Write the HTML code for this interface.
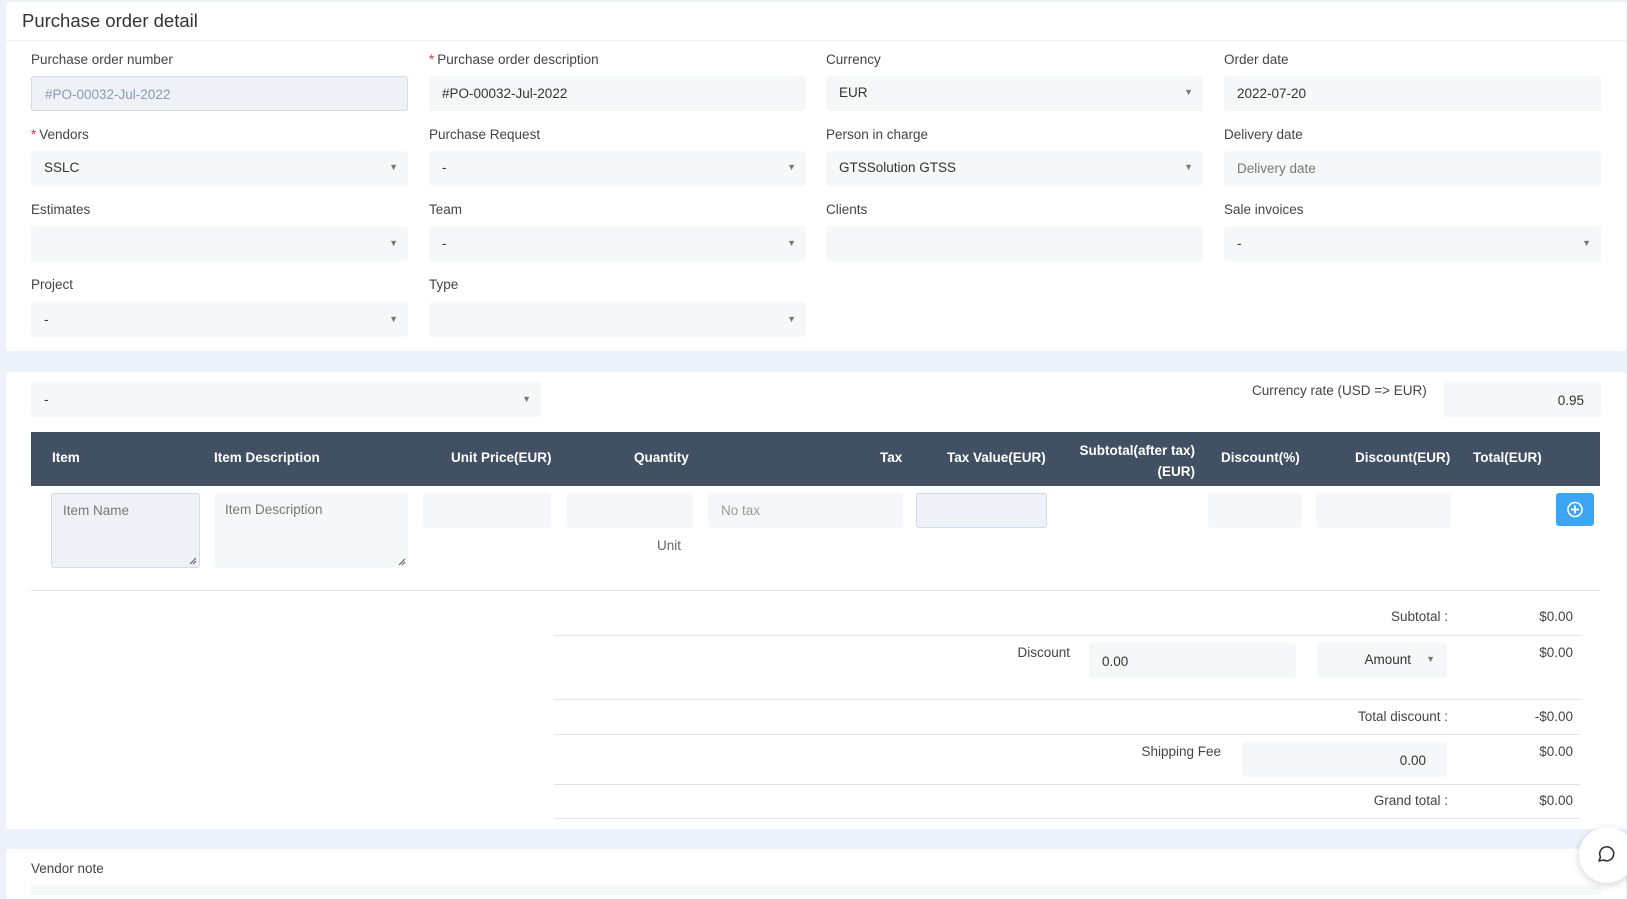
<!DOCTYPE html>
<html><head><meta charset="utf-8"><style>
*{box-sizing:border-box;margin:0;padding:0}
body{width:1627px;height:891px;overflow:hidden;background:#edf1f9;font-family:"Liberation Sans",sans-serif;font-size:13.5px;color:#4a4a4a;position:relative}
.a{position:absolute}
.card{position:absolute;background:#fff;left:6px;width:1620px;border-radius:3px}
.lbl{position:absolute;font-size:13.5px;color:#444;white-space:nowrap}
.req{color:#e53935;margin-right:3px}
.in{position:absolute;background:#f6f7f9;border-radius:3px;height:35px;font-size:13.5px;color:#333;padding:0 13px;line-height:35px;white-space:nowrap}
.dis{background:#eef1f6;border:1px solid #d3dae4;color:#8a9ab5}
.ph{color:#777}
.car{position:absolute;right:10px;top:0;font-size:9px;color:#777}
.th{position:absolute;color:#fff;font-weight:bold;font-size:13.5px;white-space:nowrap}
.hl{position:absolute;height:1px;background:#dfe2e6}
.r{text-align:right}
.grip{position:absolute;right:2px;bottom:2px}
</style></head><body>
<div class="card" style="top:2px;height:349px">
<div class="a" style="left:16px;top:8px;font-size:18.5px;color:#333">Purchase order detail</div>
<div class="hl" style="left:0;top:38px;width:1621px;background:#eceef1"></div>
</div>
<div class="lbl" style="left:31px;top:52px">Purchase order number</div>
<div class="in dis" style="left:31px;top:76px;width:377px">#PO-00032-Jul-2022</div>
<div class="lbl" style="left:429px;top:52px"><span class="req">*</span>Purchase order description</div>
<div class="in" style="left:429px;top:76px;width:377px">#PO-00032-Jul-2022</div>
<div class="lbl" style="left:826px;top:52px">Currency</div>
<div class="in" style="left:826px;top:76px;width:377px;line-height:33px">EUR<span class="car">▼</span></div>
<div class="lbl" style="left:1224px;top:52px">Order date</div>
<div class="in" style="left:1224px;top:76px;width:377px">2022-07-20</div>

<div class="lbl" style="left:31px;top:127px"><span class="req">*</span>Vendors</div>
<div class="in" style="left:31px;top:151px;width:377px;line-height:33px">SSLC<span class="car">▼</span></div>
<div class="lbl" style="left:429px;top:127px">Purchase Request</div>
<div class="in" style="left:429px;top:151px;width:377px;line-height:33px">-<span class="car">▼</span></div>
<div class="lbl" style="left:826px;top:127px">Person in charge</div>
<div class="in" style="left:826px;top:151px;width:377px;line-height:33px">GTSSolution GTSS<span class="car">▼</span></div>
<div class="lbl" style="left:1224px;top:127px">Delivery date</div>
<div class="in ph" style="left:1224px;top:151px;width:377px">Delivery date</div>

<div class="lbl" style="left:31px;top:202px">Estimates</div>
<div class="in" style="left:31px;top:226px;width:377px"><span class="car">▼</span></div>
<div class="lbl" style="left:429px;top:202px">Team</div>
<div class="in" style="left:429px;top:226px;width:377px">-<span class="car">▼</span></div>
<div class="lbl" style="left:826px;top:202px">Clients</div>
<div class="in" style="left:826px;top:226px;width:377px"></div>
<div class="lbl" style="left:1224px;top:202px">Sale invoices</div>
<div class="in" style="left:1224px;top:226px;width:377px">-<span class="car">▼</span></div>

<div class="lbl" style="left:31px;top:277px">Project</div>
<div class="in" style="left:31px;top:302px;width:377px">-<span class="car">▼</span></div>
<div class="lbl" style="left:429px;top:277px">Type</div>
<div class="in" style="left:429px;top:302px;width:377px"><span class="car">▼</span></div>

<div class="card" style="top:372px;height:457px"></div>
<div class="in" style="left:31px;top:382px;width:510px">-<span class="car">▼</span></div>
<div class="lbl" style="left:1252px;top:383px">Currency rate (USD =&gt; EUR)</div>
<div class="in r" style="left:1444px;top:382px;width:157px;padding-right:17px;line-height:37px">0.95</div>

<div class="a" style="left:31px;top:432px;width:1569px;height:54px;background:#415163"></div>
<div class="th" style="left:52px;top:450px">Item</div>
<div class="th" style="left:214px;top:450px">Item Description</div>
<div class="th" style="left:451px;top:450px">Unit Price(EUR)</div>
<div class="th" style="left:634px;top:450px">Quantity</div>
<div class="th" style="left:880px;top:450px">Tax</div>
<div class="th" style="left:947px;top:450px">Tax Value(EUR)</div>
<div class="th r" style="left:1060px;top:440px;width:135px;line-height:21px">Subtotal(after tax)<br>(EUR)</div>
<div class="th" style="left:1221px;top:450px">Discount(%)</div>
<div class="th" style="left:1355px;top:450px">Discount(EUR)</div>
<div class="th" style="left:1473px;top:450px">Total(EUR)</div>

<div class="in dis ph" style="left:51px;top:493px;width:149px;height:75px;line-height:34px;padding-left:11px">Item Name<svg class="grip" width="8" height="8"><path d="M1 7L7 1M4 7L7 4" stroke="#555" stroke-width="1"/></svg></div>
<div class="in ph" style="left:214px;top:493px;width:194px;height:75px;line-height:34px;padding-left:11px">Item Description<svg class="grip" width="8" height="8"><path d="M1 7L7 1M4 7L7 4" stroke="#555" stroke-width="1"/></svg></div>
<div class="in" style="left:423px;top:493px;width:128px"></div>
<div class="in" style="left:566px;top:493px;width:127px"></div>
<div class="in ph" style="left:708px;top:493px;width:195px;color:#999">No tax</div>
<div class="in dis" style="left:916px;top:493px;width:131px"></div>
<div class="in" style="left:1208px;top:493px;width:94px"></div>
<div class="in" style="left:1316px;top:493px;width:135px"></div>
<div class="a" style="left:1556px;top:493px;width:38px;height:33px;background:#3ca6f5;border-radius:3px">
<svg width="38" height="33" viewBox="0 0 38 33"><circle cx="19" cy="16.5" r="7" fill="none" stroke="#fff" stroke-width="1.6"/><path d="M19 12.5v8M15 16.5h8" stroke="#fff" stroke-width="1.8"/></svg></div>
<div class="lbl" style="left:657px;top:538px;color:#666">Unit</div>
<div class="hl" style="left:31px;top:590px;width:1569px"></div>

<div class="lbl r" style="left:1250px;top:609px;width:198px">Subtotal :</div>
<div class="lbl r" style="left:1480px;top:609px;width:93px">$0.00</div>
<div class="hl" style="left:554px;top:635px;width:1026px"></div>
<div class="lbl r" style="left:970px;top:645px;width:100px">Discount</div>
<div class="in" style="left:1089px;top:643px;width:207px;line-height:37px">0.00</div>
<div class="in r" style="left:1317px;top:643px;width:130px;padding-right:36px;line-height:33px">Amount<span class="car" style="right:12px">▼</span></div>
<div class="lbl r" style="left:1480px;top:645px;width:93px">$0.00</div>
<div class="hl" style="left:554px;top:699px;width:1026px"></div>
<div class="lbl r" style="left:1250px;top:709px;width:198px">Total discount :</div>
<div class="lbl r" style="left:1480px;top:709px;width:93px">-$0.00</div>
<div class="hl" style="left:554px;top:734px;width:1026px"></div>
<div class="lbl r" style="left:1100px;top:744px;width:121px">Shipping Fee</div>
<div class="in r" style="left:1242px;top:742px;width:205px;padding-right:21px;line-height:37px">0.00</div>
<div class="lbl r" style="left:1480px;top:744px;width:93px">$0.00</div>
<div class="hl" style="left:554px;top:784px;width:1026px"></div>
<div class="lbl r" style="left:1250px;top:793px;width:198px">Grand total :</div>
<div class="lbl r" style="left:1480px;top:793px;width:93px">$0.00</div>
<div class="hl" style="left:554px;top:818px;width:1026px"></div>

<div class="card" style="top:849px;height:50px"></div>
<div class="lbl" style="left:31px;top:861px">Vendor note</div>
<div class="a" style="left:31px;top:885px;width:1570px;height:10px;background:#f6f7f9"></div>
<div class="a" style="left:1579px;top:827px;width:56px;height:56px;border-radius:50%;background:#fff;box-shadow:0 2px 8px rgba(0,0,0,.18)">
<svg width="56" height="56" viewBox="0 0 56 56"><path d="M20 34l1.5-4a7 7 0 1 1 3 3z" fill="none" stroke="#333" stroke-width="1.6" stroke-linejoin="round"/></svg></div>
</body></html>
